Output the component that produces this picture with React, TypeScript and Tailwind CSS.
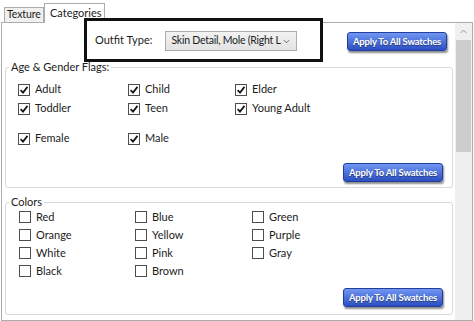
import React from "react";

const ageFlags: [string, boolean][][] = [
  [["Adult", true], ["Child", true], ["Elder", true]],
  [["Toddler", true], ["Teen", true], ["Young Adult", true]],
];

const colors = [
  ["Red", "Blue", "Green"],
  ["Orange", "Yellow", "Purple"],
  ["White", "Pink", "Gray"],
  ["Black", "Brown", ""],
];

function Check({ label, checked }: { label: string; checked?: boolean }) {
  return (
    <div className="flex items-center gap-[5px] h-full">
      <span className="w-[12px] h-[12px] border border-[#4d4d4d] bg-white flex items-center justify-center shrink-0">
        {checked && (
          <svg viewBox="0 0 10 10" className="w-[10px] h-[10px]">
            <path d="M1.6 5.1 L4 7.6 L8.5 1.9" fill="none" stroke="#141414" strokeWidth="1.7" />
          </svg>
        )}
      </span>
      <span>{label}</span>
    </div>
  );
}

function ApplyButton() {
  return (
    <button className="w-[100px] h-[19px] rounded-[3px] border border-[#233f9e] bg-linear-to-b from-[#7196f2] to-[#2c4ec2] text-white font-bold text-[9.5px] tracking-[-0.2px] leading-none shadow-[1px_2px_2px_rgba(0,0,0,0.45)] [text-shadow:0_1px_1px_rgba(0,0,0,0.45)]">
      Apply To All Swatches
    </button>
  );
}

export default function App() {
  return (
    <div className="w-[474px] h-[321px] bg-white overflow-hidden text-[11px] text-[#1c1c1c] font-[family-name:Lato,'Noto_Sans',sans-serif]">
      {/* tabs */}
      <div className="flex items-end h-[22px] pl-[4px]">
        <div className="h-[15px] w-[40px] border border-b-0 border-[#acacac] bg-[#f0f0f0] pl-[2px] text-[10.5px] tracking-[-0.1px] leading-[13px] whitespace-nowrap">
          Texture
        </div>
        <div className="relative z-10 -mb-px h-[20px] w-[61px] border border-b-0 border-[#acacac] bg-white pl-[5px] leading-[17px]">
          Categories
        </div>
      </div>

      <div className="flex h-[299px] w-[472px] ml-[1px] border border-[#acacac]">
        <div className="flex-1 flex flex-col">
          {/* top row */}
          <div className="flex items-start h-[37px] shrink-0">
            <div className="relative z-20 -mt-[5px] ml-[82px] w-[239px] h-[44px] border-[3px] border-[#111] bg-white flex items-center pl-[8px]">
              <span>Outfit Type:</span>
              <div className="ml-[13px] mt-[2px] w-[132px] h-[20px] border border-[#acacac] bg-linear-to-b from-[#f2f2f2] to-[#e3e3e3] flex items-center pl-[5px] pr-[6px]">
                <span className="flex-1 whitespace-nowrap text-[10.5px] tracking-[-0.25px]">Skin Detail, Mole (Right L</span>
                <svg viewBox="0 0 8 5" className="w-[7px] h-[5px] ml-[2px] shrink-0">
                  <path d="M1 1 L4 4 L7 1" fill="none" stroke="#606060" strokeWidth="1.1" />
                </svg>
              </div>
            </div>
            <div className="ml-auto mr-[8px] mt-[9px]">
              <ApplyButton />
            </div>
          </div>

          {/* age & gender */}
          <fieldset className="ml-[3px] mr-[2px] border border-[#d5dadf] rounded-[3px] pl-[3px] pr-[9px] pb-[5px]">
            <legend className="px-[2px] leading-[14px]">Age &amp; Gender Flags:</legend>
            <div className="ml-[9px] mt-[6px]">
              {ageFlags.map((row, i) => (
                <div key={i} className="grid grid-cols-[110px_107px_1fr] h-[19px]">
                  {row.map(([l, c]) => (
                    <Check key={l} label={l} checked={c} />
                  ))}
                </div>
              ))}
              <div className="grid grid-cols-[110px_107px_1fr] h-[19px] mt-[11px]">
                <Check label="Female" checked />
                <Check label="Male" checked />
              </div>
            </div>
            <div className="flex justify-end mt-[15px]">
              <ApplyButton />
            </div>
          </fieldset>

          {/* colors */}
          <fieldset className="mt-[7px] ml-[3px] mr-[2px] border border-[#d5dadf] rounded-[3px] pl-[3px] pr-[9px] pb-[7px]">
            <legend className="px-[2px] leading-[14px]">Colors</legend>
            <div className="ml-[10px] -mt-[1px]">
              {colors.map((row, i) => (
                <div key={i} className="grid grid-cols-[116px_117px_1fr] h-[18px]">
                  {row.map((l, j) => (l ? <Check key={l} label={l} /> : <div key={j} />))}
                </div>
              ))}
            </div>
            <div className="flex justify-end mt-[8px]">
              <ApplyButton />
            </div>
          </fieldset>
        </div>

        {/* scrollbar */}
        <div className="w-[17px] bg-[#f0f0f0] flex flex-col items-center shrink-0">
          <div className="h-[17px] w-full flex items-center justify-center">
            <svg viewBox="0 0 8 5" className="w-[7px] h-[5px]">
              <path d="M1 4 L4 1 L7 4" fill="none" stroke="#8a8a8a" strokeWidth="1.1" />
            </svg>
          </div>
          <div className="w-[15px] h-[112px] bg-[#cdcdcd]" />
        </div>
      </div>
    </div>
  );
}
